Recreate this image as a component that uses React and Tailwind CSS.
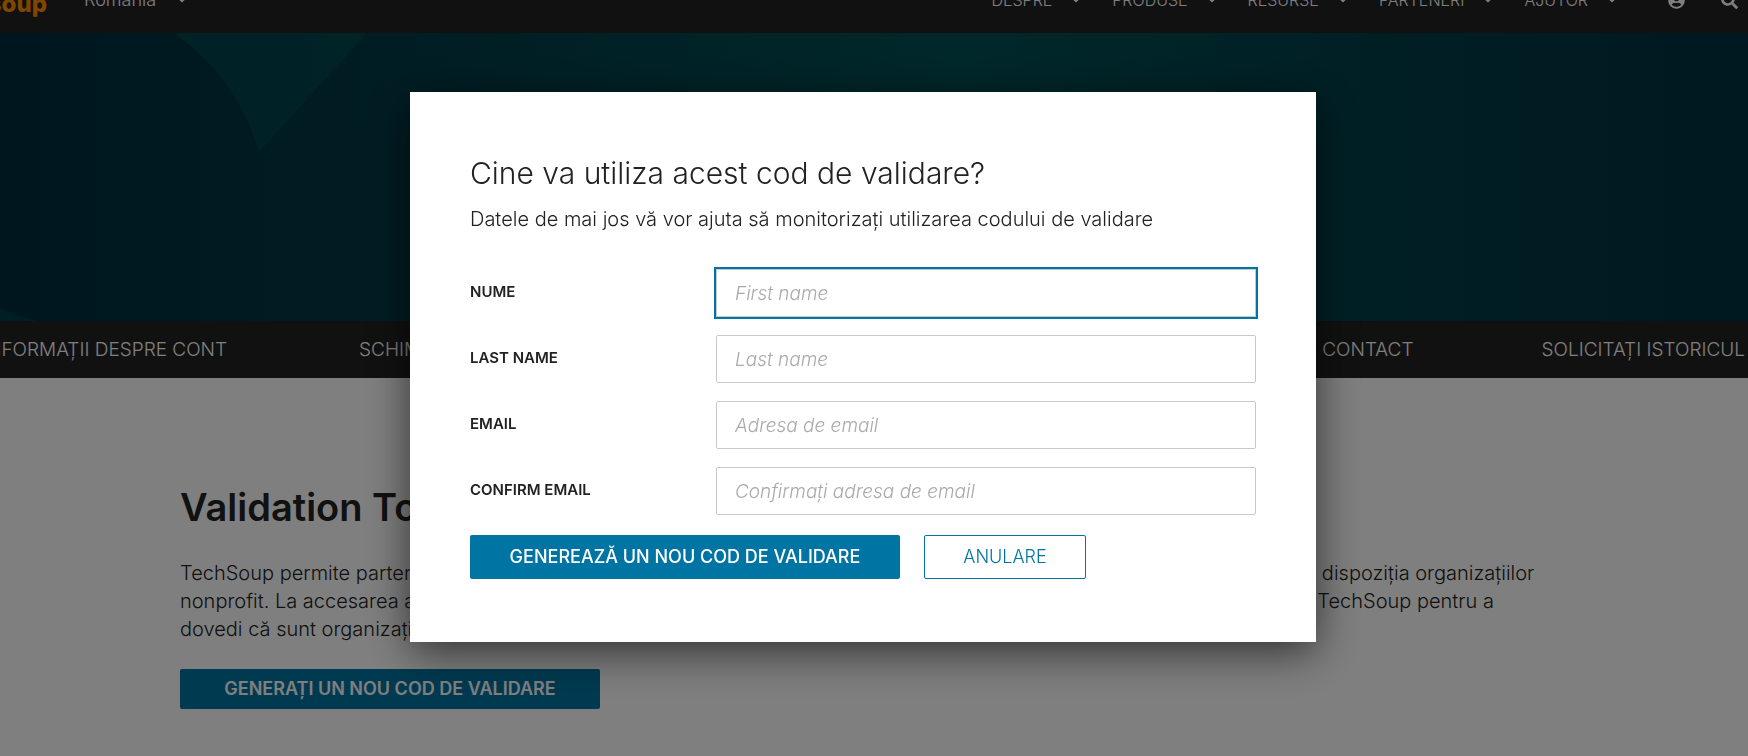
import React from 'react';
import { FaCaretDown, FaSearch, FaUserCircle } from 'react-icons/fa';

const menuItems = ['DESPRE', 'PRODUSE', 'RESURSE', 'PARTENERI', 'AJUTOR'];

const fields = [
  { id: 'first-name', label: 'NUME', placeholder: 'First name', type: 'text', active: true },
  { id: 'last-name', label: 'LAST NAME', placeholder: 'Last name', type: 'text' },
  { id: 'email', label: 'EMAIL', placeholder: 'Adresa de email', type: 'email' },
  { id: 'confirm-email', label: 'CONFIRM EMAIL', placeholder: 'Confirmați adresa de email', type: 'email' },
];

const Header = () => (
  <header className="-mt-[33px] flex h-[66px] items-center justify-between bg-[#222] pr-[10px] text-white">
    <div className="flex items-center">
      <a href="#" className="flex w-[47px] justify-end overflow-hidden pt-2 text-2xl font-extrabold text-[#ff8c00]">techsoup</a>
      <button className="ml-[37px] flex items-center gap-5 text-lg font-light">
        România <FaCaretDown size={12} />
      </button>
    </div>
    <div className="flex items-center">
      <nav className="flex gap-[30px]">
        {menuItems.map(item => (
          <button key={item} className="flex items-center gap-[18px] text-base font-light">
            {item} <FaCaretDown size={12} />
          </button>
        ))}
      </nav>
      <button aria-label="Cont" className="ml-[50px]"><FaUserCircle size={17} /></button>
      <button aria-label="Căutare" className="ml-[36px]"><FaSearch size={17} /></button>
    </div>
  </header>
);

const Hero = () => (
  <div className="relative h-[288px] overflow-hidden bg-linear-to-r from-[#002c3e] via-[#005054] via-55% to-[#003040]">
    <svg className="absolute top-0 left-0" width="420" height="288" viewBox="0 0 420 288" fill="#006060" fillOpacity="0.35">
      <path d="M175 0 Q240 49 259 119 L367 0 Z" />
      <path d="M0 276 L36 288 H0 Z" />
    </svg>
  </div>
);

const AccountNav = () => (
  <nav className="flex h-[57px] items-center justify-between overflow-hidden bg-[#222] pt-px text-[19px] font-light whitespace-nowrap text-white">
    <div className="-ml-[18px] flex gap-[132px]">
      <a href="#">INFORMAȚII DESPRE CONT</a>
      <a href="#">SCHIMBAȚI PAROLA</a>
    </div>
    <div className="flex gap-[128px] pr-[3px]">
      <a href="#">CONTACT</a>
      <a href="#">SOLICITAȚI ISTORICUL</a>
    </div>
  </nav>
);

const Content = () => (
  <section className="px-[180px] pt-[103px]">
    <h1 className="text-[38px] leading-[52px] font-semibold">Validation Tokens</h1>
    <p className="mt-[26px] text-xl leading-7 font-light whitespace-nowrap">
      TechSoup permite partenerilor donatori să verifice eligibilitatea și să ofere produse, servicii gratuite și noile resurse puse la dispoziția organizațiilor
      <br />
      nonprofit. La accesarea acestor resurse, organizațiile eligibile vor folosi un cod de validare generat din contul de pe site-ul TechSoup pentru a
      <br />
      dovedi că sunt organizații eligibile.
    </p>
    <button className="mt-[26px] h-10 w-[420px] rounded-xs bg-[#0074a2] text-lg font-semibold text-white">
      GENERAȚI UN NOU COD DE VALIDARE
    </button>
  </section>
);

const ValidationModal = () => (
  <div className="fixed inset-0 flex items-start justify-center bg-black/50 pt-[92px] pr-[22px]">
    <div role="dialog" aria-modal="true" aria-labelledby="modal-title" className="w-[906px] bg-white px-[60px] pt-[60px] pb-[63px] shadow-[0_10px_40px_rgba(0,0,0,0.6)]">
      <h2 id="modal-title" className="text-[30px] leading-[42px] font-light">Cine va utiliza acest cod de validare?</h2>
      <p className="mt-[10px] text-xl leading-[30px] font-light">Datele de mai jos vă vor ajuta să monitorizați utilizarea codului de validare</p>
      <form className="mt-[35px]">
        <div className="space-y-[18px]">
          {fields.map(f => (
            <div key={f.id} className="flex items-center">
              <label htmlFor={f.id} className="w-[246px] pb-0.5 text-[15px] font-semibold">{f.label}</label>
              <input
                id={f.id}
                type={f.type}
                placeholder={f.placeholder}
                className={`h-12 min-w-0 flex-1 border border-[#c8c8c8] px-[18px] text-[19px] font-light placeholder:text-[#aaa] placeholder:italic ${f.active ? 'outline-2 outline-[#0074a2]' : 'rounded-xs outline-none'}`}
              />
            </div>
          ))}
        </div>
        <div className="mt-5 flex gap-6">
          <button type="button" className="h-11 w-[430px] rounded-xs bg-[#0074a2] text-lg font-medium text-white">GENEREAZĂ UN NOU COD DE VALIDARE</button>
          <button type="button" className="h-11 w-[162px] rounded-xs border border-[#0074a2] text-lg font-light text-[#0074a2]">ANULARE</button>
        </div>
      </form>
    </div>
  </div>
);

export default function App() {
  return (
    <div className="h-screen overflow-hidden bg-white font-[Inter,sans-serif] text-[#222]">
      <Header />
      <Hero />
      <AccountNav />
      <Content />
      <ValidationModal />
    </div>
  );
}
